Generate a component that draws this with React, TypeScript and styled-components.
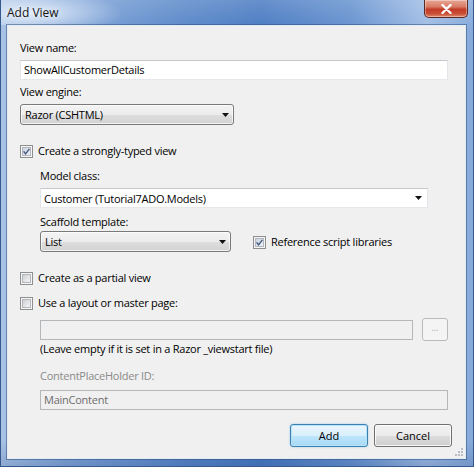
import React from 'react';
import styled, { createGlobalStyle } from 'styled-components';

const GlobalStyle = createGlobalStyle`
  html, body {
    margin: 0;
    padding: 0;
    background: #6f97cf;
  }
  * {
    box-sizing: border-box;
  }
`;

const Arrow = () => (
  <svg width="7" height="4" viewBox="0 0 7 4">
    <path d="M0 0 H7 L3.5 4 Z" fill="#111" />
  </svg>
);

const Check = () => (
  <svg width="9" height="9" viewBox="0 0 9 9">
    <path d="M1.6 4.4 L3.6 6.8 L7.4 1.8" stroke="#46597f" strokeWidth="1.4" fill="none" />
  </svg>
);

const Grip = () => (
  <svg width="11" height="11" viewBox="0 0 11 11">
    {[
      [8, 2], [8, 5], [5, 5], [8, 8], [5, 8], [2, 8],
    ].map(([x, y]) => (
      <rect key={`${x}-${y}`} x={x} y={y} width="2" height="2" fill="#b9bcc2" />
    ))}
  </svg>
);

const CheckField = ({ checked, children }: { checked?: boolean; children: React.ReactNode }) => (
  <CheckRow>
    <Box $checked={checked}>{checked && <Check />}</Box>
    <span>{children}</span>
  </CheckRow>
);

const App = () => {
  return (
    <>
      <GlobalStyle />
      <Window>
        <TitleBar>
          <Title>Add View</Title>
          <CloseButton>
            <svg width="11" height="10" viewBox="0 0 11 10">
              <path d="M1.5 1 L9.5 9 M9.5 1 L1.5 9" stroke="#fff" strokeWidth="2.4" strokeLinecap="round" />
            </svg>
          </CloseButton>
        </TitleBar>

        <Client>
          <FieldLabel>View name:</FieldLabel>
          <TextBox $width="428px" $top="5px">ShowAllCustomerDetails</TextBox>

          <FieldLabel $top="4px">View engine:</FieldLabel>
          <DropDown $width="214px" $top="5px">
            <span>Razor (CSHTML)</span>
            <Arrow />
          </DropDown>

          <CheckSpacer $top="18px">
            <CheckField checked>Create a strongly-typed view</CheckField>
          </CheckSpacer>

          <Indent>
            <FieldLabel $top="10px">Model class:</FieldLabel>
            <ComboBox $width="388px" $top="5px">
              <span>Customer (Tutorial7ADO.Models)</span>
              <Arrow />
            </ComboBox>

            <FieldLabel $top="6px">Scaffold template:</FieldLabel>
            <TemplateRow>
              <DropDown $width="191px">
                <span>List</span>
                <Arrow />
              </DropDown>
              <CheckField checked>Reference script libraries</CheckField>
            </TemplateRow>
          </Indent>

          <CheckSpacer $top="18px">
            <CheckField>Create as a partial view</CheckField>
          </CheckSpacer>
          <CheckSpacer $top="10px">
            <CheckField>Use a layout or master page:</CheckField>
          </CheckSpacer>

          <Indent>
            <LayoutRow>
              <TextBox $width="373px" $disabled />
              <BrowseButton>...</BrowseButton>
            </LayoutRow>
            <FieldLabel>(Leave empty if it is set in a Razor _viewstart file)</FieldLabel>
            <FieldLabel $top="12px" $muted>ContentPlaceHolder ID:</FieldLabel>
            <TextBox $width="408px" $top="7px" $disabled>MainContent</TextBox>
          </Indent>

          <ButtonBar>
            <DialogButton $primary>Add</DialogButton>
            <DialogButton>Cancel</DialogButton>
          </ButtonBar>

          <GripCorner>
            <Grip />
          </GripCorner>
        </Client>
      </Window>
    </>
  );
};

export default App;

const Window = styled.div`
  width: 474px;
  height: 467px;
  display: flex;
  flex-direction: column;
  border: 1px solid #35598c;
  border-top: none;
  background:
    linear-gradient(180deg, rgba(255, 255, 255, 0.16) 0%, rgba(255, 255, 255, 0) 30px, rgba(0, 0, 0, 0) 440px, rgba(20, 50, 110, 0.18) 100%),
    linear-gradient(90deg, #a9c3e6 0%, #82a6d9 14%, #5b89c9 38%, #4a7bc2 55%, #6692cf 74%, #a0bde5 90%, #87aadb 100%);
  font-family: "Open Sans", "Noto Sans", sans-serif;
  font-size: 11px;
  color: #000;
`;

const TitleBar = styled.div`
  height: 25px;
  display: flex;
  align-items: center;
  padding-left: 6px;
  background: radial-gradient(ellipse 90px 22px at 32px 13px, rgba(235, 243, 252, 0.85), rgba(235, 243, 252, 0));
`;

const Title = styled.div`
  font-size: 12px;
  color: #151515;
  text-shadow: 0 0 6px rgba(255, 255, 255, 0.9);
`;

const CloseButton = styled.div`
  margin-left: auto;
  margin-right: 5px;
  align-self: flex-start;
  width: 44px;
  height: 18px;
  display: flex;
  align-items: center;
  justify-content: center;
  border: 1px solid #5c2a24;
  border-top: none;
  border-radius: 0 0 5px 5px;
  background: linear-gradient(180deg, #e9a896 0%, #d77a64 40%, #c23b26 55%, #c84f35 80%, #e08a6c 100%);
  box-shadow: inset 0 0 0 1px rgba(255, 255, 255, 0.35);
`;

const Client = styled.div`
  position: relative;
  flex: 1;
  margin: 0 7px 7px 6px;
  display: flex;
  flex-direction: column;
  padding: 14px 13px 0 12px;
  background: #f0f0f0;
  border: 1px solid #e4ebf4;
  box-shadow: 0 0 0 1px rgba(48, 82, 128, 0.55);
`;

const FieldLabel = styled.div<{ $top?: string; $muted?: boolean }>`
  height: 15px;
  line-height: 15px;
  margin-top: ${(p) => p.$top || '0'};
  letter-spacing: -0.25px;
  white-space: nowrap;
  color: ${(p) => (p.$muted ? '#8a8a8a' : '#000')};
`;

const TextBox = styled.div<{ $width: string; $top?: string; $disabled?: boolean }>`
  width: ${(p) => p.$width};
  height: 20px;
  margin-top: ${(p) => p.$top || '0'};
  padding-left: 3px;
  line-height: 18px;
  letter-spacing: -0.25px;
  white-space: nowrap;
  color: ${(p) => (p.$disabled ? '#6d6d6d' : '#000')};
  background: ${(p) => (p.$disabled ? '#f0f0f0' : '#fff')};
  border: 1px solid;
  border-color: ${(p) => (p.$disabled ? '#b4b7ba' : '#c3c6cb #e2e5e9 #e6e8eb #e2e5e9')};
`;

const ComboBox = styled.div<{ $width: string; $top?: string }>`
  width: ${(p) => p.$width};
  height: 20px;
  margin-top: ${(p) => p.$top || '0'};
  display: flex;
  align-items: center;
  justify-content: space-between;
  padding: 0 5px 0 3px;
  letter-spacing: -0.25px;
  white-space: nowrap;
  background: #fff;
  border: 1px solid;
  border-color: #c3c6cb #e2e5e9 #e6e8eb #e2e5e9;
`;

const DropDown = styled.div<{ $width: string; $top?: string }>`
  width: ${(p) => p.$width};
  height: 21px;
  margin-top: ${(p) => p.$top || '0'};
  display: flex;
  align-items: center;
  justify-content: space-between;
  padding: 0 4px 0 4px;
  letter-spacing: -0.25px;
  white-space: nowrap;
  border: 1px solid #7a7a7a;
  border-radius: 3px;
  background: linear-gradient(180deg, #f3f3f3 0%, #ececec 50%, #dedede 51%, #d2d2d2 100%);
  box-shadow: inset 0 0 0 1px rgba(255, 255, 255, 0.7);
`;

const CheckSpacer = styled.div<{ $top: string }>`
  margin-top: ${(p) => p.$top};
`;

const CheckRow = styled.div`
  display: flex;
  align-items: center;
  gap: 5px;
  height: 15px;
  line-height: 15px;
  letter-spacing: -0.25px;
  white-space: nowrap;
`;

const Box = styled.div<{ $checked?: boolean }>`
  position: relative;
  width: 13px;
  height: 13px;
  flex: none;
  margin-top: 1px;
  border: 1px solid #8e8f8f;
  background: #f6f6f6;
  display: flex;
  align-items: center;
  justify-content: center;

  &::before {
    content: "";
    position: absolute;
    inset: 1px;
    border: 1px solid #b3b7bd;
    background: ${(p) =>
      p.$checked
        ? 'linear-gradient(135deg, #c9d3e2 0%, #eef2f8 100%)'
        : 'linear-gradient(135deg, #cdd0d4 0%, #f4f4f4 100%)'};
  }

  svg {
    position: relative;
  }
`;

const Indent = styled.div`
  display: flex;
  flex-direction: column;
  padding-left: 20px;
`;

const TemplateRow = styled.div`
  display: flex;
  align-items: center;
  gap: 22px;
  margin-top: 2px;
`;

const LayoutRow = styled.div`
  display: flex;
  align-items: center;
  gap: 9px;
  margin-top: 8px;
  height: 23px;
`;

const BrowseButton = styled.div`
  width: 26px;
  height: 23px;
  display: flex;
  align-items: center;
  justify-content: center;
  padding-bottom: 4px;
  font-size: 9px;
  color: #a6a6a6;
  border: 1px solid #b8bbbe;
  border-radius: 3px;
  background: #f4f4f4;
`;

const ButtonBar = styled.div`
  display: flex;
  justify-content: flex-end;
  gap: 6px;
  margin-top: 14px;
`;

const DialogButton = styled.div<{ $primary?: boolean }>`
  width: 78px;
  height: 23px;
  display: flex;
  align-items: center;
  justify-content: center;
  font-size: 11px;
  border-radius: 3px;
  border: 1px solid ${(p) => (p.$primary ? '#3c7fb1' : '#707070')};
  background: ${(p) =>
    p.$primary
      ? 'linear-gradient(180deg, #eaf6fd 0%, #d9f0fc 50%, #bee6fd 51%, #a7d9f5 100%)'
      : 'linear-gradient(180deg, #f2f2f2 0%, #ebebeb 50%, #dddddd 51%, #cfcfcf 100%)'};
  box-shadow: ${(p) =>
    p.$primary
      ? 'inset 0 0 0 1px #b8e4fb, 0 0 2px rgba(80, 170, 230, 0.6)'
      : 'inset 0 0 0 1px rgba(255, 255, 255, 0.8)'};
`;

const GripCorner = styled.div`
  position: absolute;
  right: 1px;
  bottom: 1px;
  display: flex;
`;
